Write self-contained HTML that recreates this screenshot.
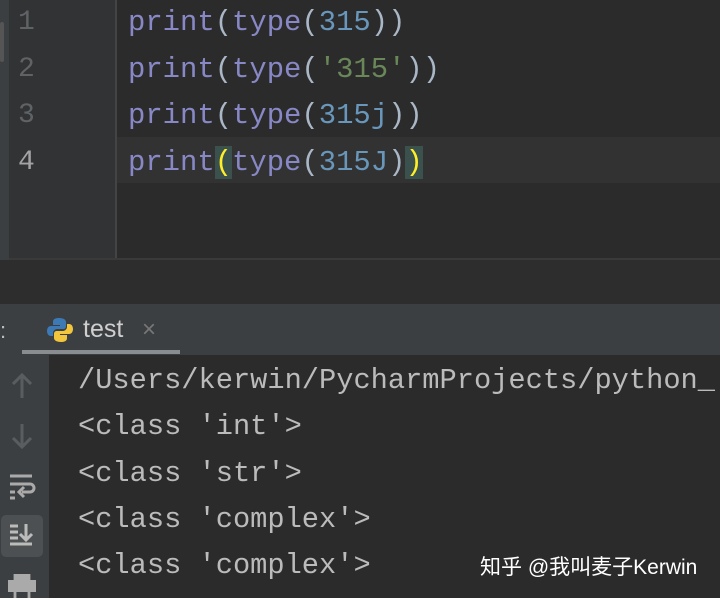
<!DOCTYPE html>
<html><head><meta charset="utf-8"><style>
*{margin:0;padding:0;box-sizing:border-box}
body{width:720px;height:598px;overflow:hidden;background:#2b2b2b;position:relative;font-family:"Liberation Mono",monospace}
.abs{position:absolute}
.code{font-size:28.9px;line-height:46.5px;white-space:pre;color:#a9b7c6}
.p{color:#8888c6}.n{color:#6897bb}.s{color:#6a8759}
.y{color:#ffef28;background:#3b514d}
.ln{color:#606366;font-size:28px;line-height:46.5px;width:60px;left:10px;text-align:left;padding-left:8px}
.out{color:#bbbbbb;font-size:28.7px;line-height:46.3px;white-space:pre}
</style></head><body>
<div class="abs" style="left:0;top:0;width:9px;height:260px;background:#3c3f41"></div>
<div class="abs" style="left:0;top:22px;width:4px;height:40px;background:#555;border-radius:2px"></div>
<div class="abs" style="left:9px;top:0;width:106px;height:260px;background:#313335"></div>
<div class="abs" style="left:115px;top:0;width:2px;height:260px;background:#444"></div>
<div class="abs" style="left:117px;top:137px;width:603px;height:46px;background:#323232"></div>
<div class="abs ln" style="top:0px">1<br>2<br>3<br><span style="color:#a4a3a3">4</span></div>
<div class="abs code" style="left:128px;top:0px"><span class="p">print</span>(<span class="p">type</span>(<span class="n">315</span>))
<span class="p">print</span>(<span class="p">type</span>(<span class="s">'315'</span>))
<span class="p">print</span>(<span class="p">type</span>(<span class="n">315j</span>))
<span class="p">print</span><span class="y">(</span><span class="p">type</span>(<span class="n">315J</span>)<span class="y">)</span></div>
<div class="abs" style="left:9px;top:258px;width:711px;height:2px;background:#3a3a3a"></div>
<div class="abs" style="left:0;top:260px;width:720px;height:44px;background:#2d2d2d"></div>
<div class="abs" style="left:0;top:304px;width:720px;height:51px;background:#3c3f41"></div>
<div class="abs" style="left:0;top:318px;color:#bbb;font:22px 'Liberation Sans',sans-serif">:</div>
<svg class="abs" style="left:46px;top:316px" width="28" height="28" viewBox="0 0 28 28">
<path d="M13 2c-6 0-6 3-6 4v3h7v1H5c-3 0-4 3-4 5s1 5 4 5h2v-3c0-2 2-4 4-4h6c2 0 3-1 3-3V6c0-2-2-4-7-4z" fill="#3d7ab5"/>
<path d="M15 26c6 0 6-3 6-4v-3h-7v-1h9c3 0 4-3 4-5s-1-5-4-5h-2v3c0 2-2 4-4 4h-6c-2 0-3 1-3 3v4c0 2 2 4 7 4z" fill="#f2c53d"/>
</svg>
<div class="abs" style="left:83px;top:315px;color:#cfcfcf;font:25px 'Liberation Sans',sans-serif">test</div>
<div class="abs" style="left:142px;top:316px;color:#777;font:24px 'Liberation Sans',sans-serif">×</div>
<div class="abs" style="left:22px;top:350px;width:158px;height:4px;background:#8a8d90"></div>
<div class="abs" style="left:0;top:355px;width:49px;height:243px;background:#3c3f41"></div>
<svg class="abs" style="left:10px;top:372px" width="24" height="28"><path d="M12 26V4M3 12l9-9 9 9" stroke="#5a5d60" stroke-width="3" fill="none"/></svg>
<svg class="abs" style="left:10px;top:422px" width="24" height="28"><path d="M12 2v22M3 16l9 9 9-9" stroke="#5a5d60" stroke-width="3" fill="none"/></svg>
<svg class="abs" style="left:8px;top:472px" width="28" height="30"><path d="M2 4h22M2 12h20a4 4 0 0 1 0 8h-8M2 20h5M2 26h5" stroke="#aaa" stroke-width="3" fill="none"/><path d="M16 15l-5 5 5 5" stroke="#aaa" stroke-width="3" fill="none"/></svg>
<div class="abs" style="left:1px;top:515px;width:42px;height:42px;background:#4c5052;border-radius:5px"></div>
<svg class="abs" style="left:8px;top:520px" width="28" height="30"><path d="M2 6h8M2 12h8M2 18h8M2 24h22M18 4v16M12 14l6 6 6-6" stroke="#bbb" stroke-width="3" fill="none"/></svg>
<div class="abs" style="left:8px;top:574px;width:28px;height:24px;background:#aaa;clip-path:polygon(20% 0,80% 0,80% 25%,100% 25%,100% 75%,80% 75%,80% 100%,70% 100%,70% 75%,30% 75%,30% 100%,20% 100%,20% 75%,0 75%,0 25%,20% 25%)"></div>
<div class="abs out" style="left:78px;top:358px">/Users/kerwin/PycharmProjects/python_
&lt;class 'int'&gt;
&lt;class 'str'&gt;
&lt;class 'complex'&gt;
&lt;class 'complex'&gt;</div>
<div class="abs" style="left:480px;top:551px;color:#fff;font:21px 'Liberation Sans','Noto Sans CJK SC',sans-serif;white-space:nowrap">知乎 @我叫麦子Kerwin</div>
</body></html>
